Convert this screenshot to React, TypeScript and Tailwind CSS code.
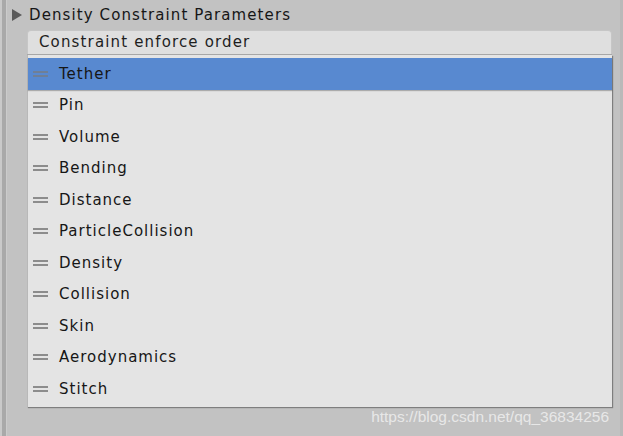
import React from "react"

const items = [
  "Tether",
  "Pin",
  "Volume",
  "Bending",
  "Distance",
  "ParticleCollision",
  "Density",
  "Collision",
  "Skin",
  "Aerodynamics",
  "Stitch",
]

function Handle({ selected }: { selected: boolean }) {
  const line = selected ? "bg-[#6f7f96]" : "bg-[#8c8c8c]"
  return (
    <div className="flex w-[15px] flex-col gap-[2px]">
      <div className={`h-[2px] ${line}`} />
      <div className={`h-[2px] ${line}`} />
    </div>
  )
}

export default function App() {
  return (
    <div
      className="flex h-[436px] w-[623px] overflow-hidden bg-[#c2c2c2] text-[#161616]"
      style={{ fontFamily: '"DejaVu Sans", Verdana, sans-serif' }}
    >
      {/* left gutter */}
      <div className="w-[2px] bg-[#c9c9c9]" />
      <div className="w-[4px] bg-[#a9a9a9]" />
      <div className="w-[1px] bg-[#cbcbcb]" />

      <div className="flex flex-1 flex-col">
        {/* foldout header */}
        <div className="flex h-[29px] items-center pl-[5px] pt-[1px]">
          <svg width="11" height="12" viewBox="0 0 11 12" className="mr-[6px]">
            <polygon points="0,0 10,6 0,12" fill="#5a5a5a" />
          </svg>
          <span className="text-[15px] tracking-[1.1px]">Density Constraint Parameters</span>
        </div>

        {/* reorderable list */}
        <div className="ml-[20px] mr-[8px] mt-[1px] flex flex-col">
          <div className="flex h-[24px] items-center rounded-t-[4px] border border-b-0 border-[#c6c6c6] bg-[#dfdfdf] pl-[11px]">
            <span className="text-[15px] tracking-[1.15px] text-[#1e1e1e]">Constraint enforce order</span>
          </div>
          <div className="h-[1px] bg-[#a7a7a7]" />
          <div className="flex flex-col border-l border-[#b8b8b8] bg-[#e4e4e4] pb-[2px] pt-[3px] shadow-[1px_1px_1px_rgba(0,0,0,0.35)]">
            {items.map((name, i) => {
              const selected = i === 0
              return (
                <div
                  key={name}
                  className={`flex h-[31.5px] items-center gap-[11px] pl-[5px] ${
                    selected ? "bg-[#5889d0] shadow-[0_1px_1px_rgba(0,0,0,0.25)]" : ""
                  }`}
                >
                  <Handle selected={selected} />
                  <span className="text-[15px] tracking-[1px]">{name}</span>
                </div>
              )
            })}
          </div>
        </div>

        <div className="mr-[11px] mt-[-2px] flex justify-end">
          <span
            className="text-[15.5px] text-[#f2f2f2]/80"
            style={{ fontFamily: '"Liberation Sans", Arial, sans-serif' }}
          >
            https://blog.csdn.net/qq_36834256
          </span>
        </div>
      </div>

      {/* right gutter */}
      <div className="w-[3px] bg-[#b9b9b9]" />
    </div>
  )
}
